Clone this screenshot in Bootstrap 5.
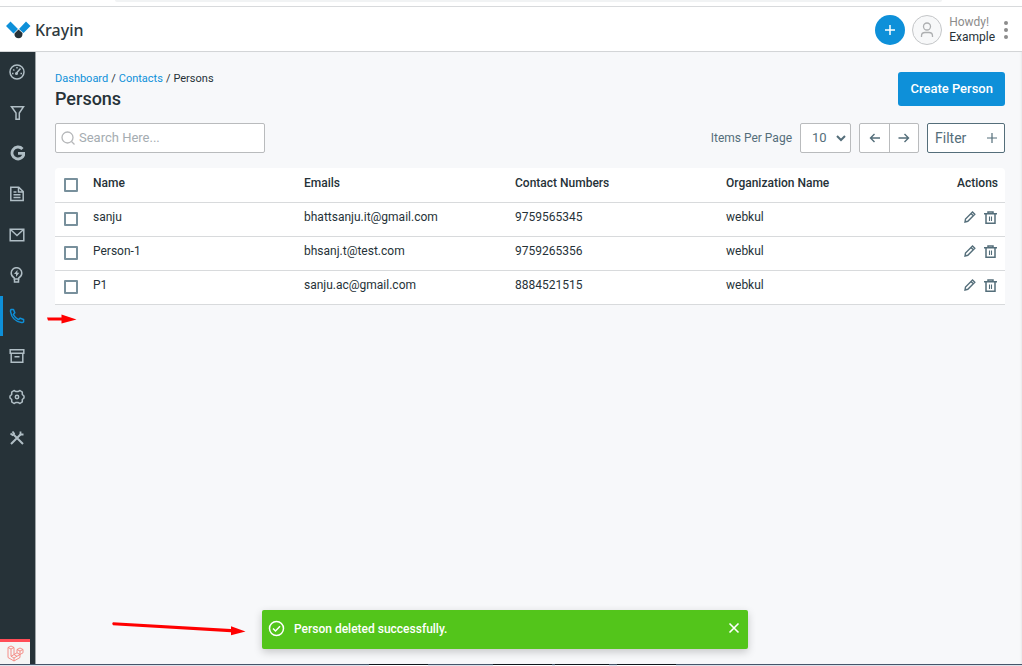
<!DOCTYPE html>
<html lang="en">
<head>
<meta charset="utf-8">
<meta name="viewport" content="width=device-width, initial-scale=1">
<title>Persons - Krayin</title>
<link href="https://cdn.jsdelivr.net/npm/bootstrap@5.3.0/dist/css/bootstrap.min.css" rel="stylesheet">
<style>
:root{--brand:#0e90d9;--slate:#546e7a;--ink:#263238;--line:#d8dadc;--grey:#b9bbbd}
body{font-family:Roboto,"Liberation Sans",sans-serif;font-size:12px;line-height:16px;color:var(--ink);background:#f7f8fa}
svg{display:block;flex:none;fill:none;stroke:currentColor}
svg.solid{stroke:none}
a{text-decoration:none;color:var(--brand)}
.browser-edge{height:7px;background:#fff;border-bottom:1px solid var(--line)}
.address-end{height:2px;margin:0 80px 0 115px;background:#f1f3f4;border-radius:0 0 8px 8px}
.topbar{height:45px;background:#fff;border-bottom:1px solid #d3d5d7;padding:2px 12px 0 6px}
.account{gap:7px}
.wordmark{font:500 16px/20px "Noto Sans","Open Sans",sans-serif;color:#2f3a40}
.quick-add{width:30px;height:30px;background:var(--brand);color:#fff}
.avatar{width:30px;height:30px;background:#f7f8f9;border:1px solid #c4c6c8;color:#adafb1}
.howdy{color:#8c8c8c}
.profile{line-height:15px}
.sidebar{width:36px;background:var(--ink);border-right:1px solid #9fa5a8}
.side-list{height:406px}
.side-list a{color:#b0bec5;padding-right:2px}
.side-list .active a{color:var(--brand);box-shadow:inset 3px 0 var(--brand)}
.content{padding:20px 17px 0 19px;box-shadow:inset -2px 0 2px -1px #e8eaec}
.crumbs{font-size:11px;line-height:14px;--bs-breadcrumb-item-padding-x:3px;--bs-breadcrumb-divider-color:#263238}
.crumbs .active{color:var(--ink)}
.title{font-size:18px;line-height:26px;font-weight:500}
.create{font-size:13px;line-height:20px;font-weight:500;height:34px;padding:0 12px;background:var(--brand);color:#fff;border-radius:3px}
.search{width:210px;height:30px;border:1px solid var(--grey);border-radius:2px;background:#fff;color:#b5b7b9;padding:0 5px}
.search input{font-size:13px;color:var(--ink)}
.search input::placeholder{color:#a5acb1}
.toolbar-row{margin-top:11px}
.tools{color:var(--slate)}
.per-page{width:51px;height:30px;border:1px solid var(--grey);border-radius:2px;background:#fff;color:var(--slate);appearance:none;padding:0 0 0 11px;font-size:13px}
.chev{right:5px;top:12px;pointer-events:none}
.pager{height:30px;border:1px solid var(--grey);border-radius:2px;background:#fff}
.pager button{width:29px;color:var(--slate)}
.pager button+button{border-left:1px solid var(--grey)!important}
.filter{width:78px;height:30px;border:1px solid var(--slate);border-radius:2px;background:#fff;color:var(--slate);font-size:14px;line-height:20px;padding:0 7px}
.grid{table-layout:fixed;margin-top:15px;background:#fff;border-radius:4px 4px 0 0;width:100%}
.grid tr{height:34px;border-bottom:1px solid var(--line)}
.grid th{font-weight:500}
.grid th,.grid td{padding:6px 0 10px}
.grid .pick{width:38px;padding:8px 0 8px 9px}
.grid .acts{width:68px;padding-right:7px;text-align:right}
.pick input{appearance:none;display:block;width:14px;height:14px;margin:0;border:2px solid #78909c;border-radius:1px;background:#fff}
.acts button{color:var(--slate)}
.acts div{padding-right:1px}
.note{left:262px;bottom:17px;width:486px;height:39px;background:#53c51b;color:#fff;border-radius:2px;font-weight:500;padding:0 8px 2px 6px;box-shadow:0 3px 8px rgba(0,0,0,.2)}
.note .msg{margin-left:9px}
.note .shut{margin-top:-2px}
.debug{left:0;bottom:2px;width:30px;height:25px;background:#f5f5f5;border-top:3px solid #ff4d57;color:#f5857e}
.arrow-a{left:46px;top:313px}
.arrow-b{left:112px;top:620px}
.taskbar{height:2px;background:#dbe2ea;border-top:1px solid #46556a}
.taskbar i{height:2px;margin-top:-1px;background:#fff;border-top:1px solid #10151c}
.task-gap{padding-left:369px}
</style>
</head>
<body>
<div class="d-flex flex-column min-vh-100 position-relative">
<div class="browser-edge"><div class="address-end"></div></div>
<header class="topbar d-flex align-items-center justify-content-between">
  <a href="#" class="d-flex align-items-center gap-1" aria-label="Krayin home">
    <svg class="solid" width="25" height="18" viewBox="0 0 25 18"><path fill="#0e90d9" d="M0 5 4.500 .5 12 8 7.500 12.500Z M13 8 20 .5 24.500 5 17.500 12Z"/><path fill="#263238" d="m12.500 8.500 4 3.500q.3 5-3.500 5.300-5-.3-4.500-4.800Z"/></svg>
    <span class="wordmark">Krayin</span>
  </a>
  <div class="account d-flex align-items-center">
    <button class="quick-add btn p-0 border-0 rounded-circle d-flex align-items-center justify-content-center" aria-label="Quick add"><svg width="12" height="12" stroke-width="1.500"><path d="M6 1v10M1 6h10"/></svg></button>
    <span class="avatar rounded-circle d-flex align-items-center justify-content-center"><svg width="14" height="16" viewBox="0 0 14 16" stroke-width="1.300"><circle cx="7" cy="4.500" r="3.500"/><path d="M1.500 15v-1q0-3.500 3.500-3.500h4q3.500 0 3.500 3.500v1"/></svg></span>
    <span class="profile d-flex flex-column"><span class="howdy">Howdy!</span><span>Example</span></span>
    <button class="btn p-0 border-0" aria-label="More"><svg class="solid" width="8" height="20" viewBox="0 0 8 20"><g fill="#8c8c8c"><circle cx="4" cy="3" r="2"/><circle cx="4" cy="10" r="2"/><circle cx="4" cy="17" r="2"/></g></svg></button>
  </div>
</header>
<div class="d-flex flex-grow-1">
  <nav class="sidebar flex-shrink-0" aria-label="Main">
    <ul class="side-list list-unstyled d-flex flex-column mb-0">
      <li class="flex-fill d-flex"><a href="#" aria-label="Dashboard" class="w-100 d-flex align-items-center justify-content-center"><svg width="16" height="16" viewBox="0 0 16 16" stroke-width="1.500"><circle cx="8" cy="8" r="7"/><path d="m7.500 9 4-4.500M3 9.500h1.500M4.200 5.500l1.200 1M8 3v1.500M11.500 9.500H13"/><circle cx="7.500" cy="9.500" r=".8"/></svg></a></li>
      <li class="flex-fill d-flex"><a href="#" aria-label="Leads" class="w-100 d-flex align-items-center justify-content-center"><svg width="16" height="16" viewBox="0 0 16 16" stroke-width="1.500"><path d="M2.500 1.700h12L10.300 8v6.300H7V8Z"/></svg></a></li>
      <li class="flex-fill d-flex"><a href="#" aria-label="Google" class="w-100 d-flex align-items-center justify-content-center"><svg width="16" height="16" viewBox="0 0 16 16" stroke-width="2.800"><path d="M13.500 4A6 6 0 1 0 15 8.300H9"/></svg></a></li>
      <li class="flex-fill d-flex"><a href="#" aria-label="Quotes" class="w-100 d-flex align-items-center justify-content-center"><svg width="16" height="16" viewBox="0 0 16 16" stroke-width="1.500"><path d="M1.800 1.200h8l4.400 4.400v9H1.800ZM9.500 1.500v4.500h4.500M4.500 6H7.500M4.500 8.700h7M4.500 11.500h7"/></svg></a></li>
      <li class="flex-fill d-flex"><a href="#" aria-label="Mail" class="w-100 d-flex align-items-center justify-content-center"><svg width="16" height="16" viewBox="0 0 16 16" stroke-width="1.500"><path d="M1.200 2.200h13.600v11.500H1.200ZM2 3l6 5.500L14 3"/></svg></a></li>
      <li class="flex-fill d-flex"><a href="#" aria-label="Activities" class="w-100 d-flex align-items-center justify-content-center"><svg class="" width="16" height="16" viewBox="0 0 16 16" stroke-width="1.500"><path d="M5.200 12V10.800Q2.200 9.200 2.200 6a5.300 5.300 0 0 1 10.600 0Q12.800 9.200 9.800 10.800V12ZM5.500 12v3h4v-3"/><path d="M8.500 2.800 5 7h2v3l3.300-4.300h-2Z" fill="currentColor" stroke="none"/></svg></a></li>
      <li class="flex-fill d-flex active"><a href="#" aria-label="Contacts" class="w-100 d-flex align-items-center justify-content-center"><svg width="16" height="16" viewBox="0 0 16 16" stroke-width="1.500" stroke-linejoin="round"><path d="M2.200 1.500H4.500L5.800 4.800 4.300 6.500Q6 9.800 9.500 11.600L11.200 10.200 14.600 11.500V13.800Q14 14.800 12.500 14.500C6 13.500 2.500 9.500 1.500 3.500Q1.300 2 2.200 1.500Z"/></svg></a></li>
      <li class="flex-fill d-flex"><a href="#" aria-label="Products" class="w-100 d-flex align-items-center justify-content-center"><svg width="16" height="16" viewBox="0 0 16 16" stroke-width="1.500"><path d="M1.200 1.700h13.600v3.600H1.200ZM2.200 5.500v8.700h11.600V5.500M5.500 8.700h5"/></svg></a></li>
      <li class="flex-fill d-flex"><a href="#" aria-label="Settings" class="w-100 d-flex align-items-center justify-content-center"><svg width="16" height="16" viewBox="0 0 16 16" stroke-width="1.500" stroke-linejoin="round"><path d="m5 1.500 1.600.9h2.800L11 1.500l2.300 1.600v2.400L15 7v2l-1.700 1.500v2.400L11 14.500l-1.600-.9H6.600L5 14.500l-2.300-1.600v-2.400L1 9V7l1.700-1.500V3.100Z"/><circle cx="8" cy="8" r="1.700"/></svg></a></li>
      <li class="flex-fill d-flex"><a href="#" aria-label="Configuration" class="w-100 d-flex align-items-center justify-content-center"><svg width="16" height="16" viewBox="0 0 16 16" stroke-width="2"><path d="m2 14 9.500-9.500M4 4l10 10"/><path d="M1.500 3.500 3.500 5 5 3.500 3.500 1.500M11.500 1.500v3h3" stroke-width="1.800"/></svg></a></li>
    </ul>
  </nav>
  <main class="content flex-grow-1">
    <div class="d-flex justify-content-between align-items-start">
      <div>
        <nav aria-label="breadcrumb"><ol class="breadcrumb crumbs mb-0"><li class="breadcrumb-item"><a href="#">Dashboard</a></li><li class="breadcrumb-item"><a href="#">Contacts</a></li><li class="breadcrumb-item active" aria-current="page">Persons</li></ol></nav>
        <h1 class="title mb-0">Persons</h1>
      </div>
      <button class="create btn border-0">Create Person</button>
    </div>
    <div class="toolbar-row d-flex justify-content-between align-items-center">
      <div class="search d-flex align-items-center">
        <svg width="14" height="14" viewBox="0 0 14 14" stroke-width="1.300"><circle cx="6.500" cy="6.500" r="5.500"/><path d="m10.500 10.500 3 3"/></svg>
        <input type="text" class="border-0 bg-transparent w-100 p-0 ms-1" placeholder="Search Here..." aria-label="Search">
      </div>
      <div class="tools d-flex align-items-center gap-2">
        <label for="perPage">Items Per Page</label>
        <div class="position-relative"><select id="perPage" class="per-page d-block"><option>10</option><option>20</option></select><svg class="chev position-absolute" width="10" height="7" viewBox="0 0 10 7" stroke-width="2"><path d="m1 1 4 4 4-4"/></svg></div>
        <div class="pager d-flex">
          <button class="btn p-0 border-0 rounded-0 d-flex align-items-center justify-content-center" aria-label="Previous"><svg width="12" height="10" stroke-width="1.400"><path d="M11 5H1.500M5.500 1l-4 4 4 4"/></svg></button>
          <button class="btn p-0 border-0 rounded-0 d-flex align-items-center justify-content-center" aria-label="Next"><svg width="12" height="10" stroke-width="1.400"><path d="M.5 5h10M6.500 1l4 4-4 4"/></svg></button>
        </div>
        <button class="filter btn d-flex align-items-center justify-content-between">Filter<svg width="10" height="10" stroke-width="1.200"><path d="M5 0v10M0 5h10"/></svg></button>
      </div>
    </div>
    <table class="grid">
      <thead><tr><th class="pick"><input type="checkbox" aria-label="Select all"></th><th>Name</th><th>Emails</th><th>Contact Numbers</th><th>Organization Name</th><th class="acts">Actions</th></tr></thead>
      <tbody id="rows"></tbody>
    </table>
  </main>
</div>
<div class="debug position-absolute d-flex align-items-center justify-content-center"><svg width="17" height="17" viewBox="0 0 17 17" stroke-width=".9"><path d="M1 2.500 4 1l3 1.500v7l3-1.700V4.500L13 3l3 1.500v3.300l-3 1.700v3L7 16l-6-3.500ZM1 2.500 4 4l3-1.500M4 4v7.300l3-1.700M4 11.300 7 13v3M7 13l6-3.500M7 9.500l3 1.800M10 4.500 13 6l3-1.500M13 6v3.500L10 7.800"/></svg></div>
<svg class="solid arrow-a position-absolute" width="32" height="13"><path fill="#f00" d="M1 4.500h14.500L15.500 1.500 30.500 6.500 15.500 10.500V7.500H2Z"/></svg>
<svg class="solid arrow-b position-absolute" width="134" height="17"><path fill="#f00" d="M1 2.200 119 9V6.200l14.500 5.300L119 15.200v-3L1 5.200Q-.5 3.500 1 2.200Z"/></svg>
<div class="note position-absolute d-flex align-items-center" role="status">
  <svg width="17" height="17" viewBox="0 0 17 17" stroke-width="1.500"><circle cx="8.500" cy="8.500" r="7"/><path d="m5 8.500 2.500 2.500 4.500-4.800"/></svg>
  <span class="msg flex-grow-1">Person deleted successfully.</span>
  <button class="shut btn p-0 border-0 text-white" aria-label="Close"><svg width="12" height="12" stroke-width="1.600"><path d="m1.500 1.500 9 9M10.500 1.500l-9 9"/></svg></button>
</div>
<div class="taskbar task-gap d-flex" id="tasks"></div>
</div>
<script src="https://cdn.jsdelivr.net/npm/bootstrap@5.3.0/dist/js/bootstrap.bundle.min.js"></script>
<script>
const people=[["sanju","bhattsanju.it@gmail.com","9759565345","webkul"],["Person-1","bhsanj.t@test.com","9759265356","webkul"],["P1","sanju.ac@gmail.com","8884521515","webkul"]];
const pencil='<svg width="12" height="12" viewBox="0 0 12 12" stroke-width="1.400"><path d="M1 11l.5-3L8.500 1l2.300 2.300-7 7ZM7 2.500l2.300 2.300"/></svg>';
const bin='<svg width="13" height="13" viewBox="0 0 13 13" stroke-width="1.500"><path d="M0 2.700h13M4 2.500V.9h5v1.600M2 3v9.200h9V3" /><path d="M5.500 5.500V10M7.500 5.500V10" stroke-width="1.100"/></svg>';
document.getElementById("rows").innerHTML=people.map(p=>`<tr><td class="pick"><input type="checkbox" aria-label="Select ${p[0]}"></td>${p.map(v=>`<td>${v}</td>`).join("")}<td class="acts"><div class="d-flex justify-content-end align-items-center gap-2"><button class="btn p-0 border-0" aria-label="Edit">${pencil}</button><button class="btn p-0 border-0" aria-label="Delete">${bin}</button></div></td></tr>`).join("");
// open windows on the taskbar: [gap before, width]
document.getElementById("tasks").innerHTML=[[0,59],[65,59],[3,54],[8,59]].map(([g,w])=>`<i style="margin-left:${g}px;width:${w}px"></i>`).join("");
</script>
</body>
</html>
